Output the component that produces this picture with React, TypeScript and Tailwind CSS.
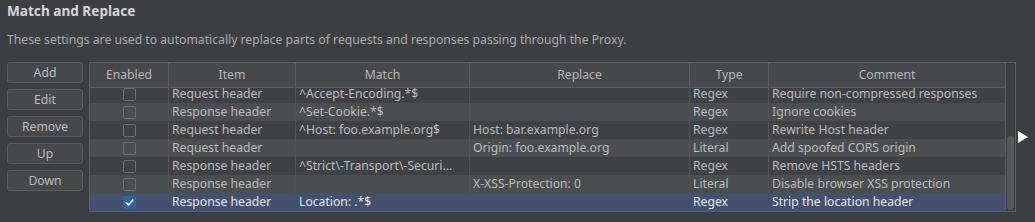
import React from "react";

type Rule = {
  enabled: boolean;
  item: string;
  match: string;
  replace: string;
  type: string;
  comment: string;
};

const rules: Rule[] = [
  { enabled: false, item: "Request header", match: "^Accept-Encoding.*$", replace: "", type: "Regex", comment: "Require non-compressed responses" },
  { enabled: false, item: "Response header", match: "^Set-Cookie.*$", replace: "", type: "Regex", comment: "Ignore cookies" },
  { enabled: false, item: "Request header", match: "^Host: foo.example.org$", replace: "Host: bar.example.org", type: "Regex", comment: "Rewrite Host header" },
  { enabled: false, item: "Request header", match: "", replace: "Origin: foo.example.org", type: "Literal", comment: "Add spoofed CORS origin" },
  { enabled: false, item: "Response header", match: "^Strict\\-Transport\\-Securi...", replace: "", type: "Regex", comment: "Remove HSTS headers" },
  { enabled: false, item: "Response header", match: "", replace: "X-XSS-Protection: 0", type: "Literal", comment: "Disable browser XSS protection" },
  { enabled: true, item: "Response header", match: "Location: .*$", replace: "", type: "Regex", comment: "Strip the location header" },
];

const buttons = ["Add", "Edit", "Remove", "Up", "Down"];

function Checkbox({ checked }: { checked: boolean }) {
  if (checked) {
    return (
      <span className="grid h-[13px] w-[13px] place-items-center rounded-[2px] bg-[#2f65a8]">
        <svg viewBox="0 0 12 12" className="h-[11px] w-[11px]">
          <path d="M2.5 6.2 L5 8.6 L9.6 3.2" fill="none" stroke="#ffffff" strokeWidth="1.6" strokeLinecap="round" strokeLinejoin="round" />
        </svg>
      </span>
    );
  }
  return <span className="h-[13px] w-[13px] rounded-[2px] border border-[#6b6f71]" />;
}

export default function App() {
  return (
    <div className="h-[222px] w-[1035px] overflow-hidden bg-[#3c3f41] pt-[1px] font-['Noto_Sans',sans-serif] text-[12px] text-[#bbbbbb]">
      <div className="px-[7px]">
        <h1 className="text-[13.6px] leading-[20px] font-bold text-[#d6d6d6]">Match and Replace</h1>
        <p className="mt-[10px] text-[12.2px] leading-[18px] text-[#a9acae]">
          These settings are used to automatically replace parts of requests and responses passing through the Proxy.
        </p>
      </div>

      <div className="mt-[13px] flex items-start pl-[7px]">
        <div className="flex w-[76px] flex-col gap-[6px]">
          {buttons.map((b) => (
            <button
              key={b}
              className="h-[21px] rounded-[3px] border border-[#5b5e60] bg-[#45494b] text-[12.2px] leading-[19px] text-[#bdbdbd]"
            >
              {b}
            </button>
          ))}
        </div>

        <div className="ml-[6px] flex h-[150px] w-[927px] border border-[#5c5f61]">
          <div className="flex min-w-0 flex-1 flex-col">
            <div className="flex h-[25px] shrink-0 border-b border-[#5c5f61] bg-[#45494a] text-[12.2px] text-[#b8b8b8]">
              <div className="flex w-[79px] items-center justify-center border-r border-[#5c5f61]">Enabled</div>
              <div className="flex w-[127px] items-center justify-center border-r border-[#5c5f61]">Item</div>
              <div className="flex w-[174px] items-center justify-center border-r border-[#5c5f61]">Match</div>
              <div className="flex w-[220px] items-center justify-center border-r border-[#5c5f61]">Replace</div>
              <div className="flex w-[79px] items-center justify-center border-r border-[#5c5f61]">Type</div>
              <div className="flex flex-1 items-center justify-center">Comment</div>
            </div>
            <div className="flex-1 overflow-hidden">
              <div className="-mt-[3px]">
                {rules.map((r, i) => {
                  const selected = r.enabled;
                  const bg = selected ? "bg-[#41516f]" : i % 2 === 0 ? "bg-[#3f4244]" : "bg-[#4a4e4f]";
                  const text = selected ? "text-[#e6e6e6]" : "text-[#bcbcbc]";
                  const sep = selected ? "border-transparent" : "border-[#515556]";
                  return (
                    <div key={i} className={`flex h-[18px] text-[12.2px] leading-[18px] ${bg} ${text}`}>
                      <div className={`flex w-[79px] items-center justify-center border-r ${sep}`}>
                        <Checkbox checked={r.enabled} />
                      </div>
                      <div className={`w-[127px] truncate border-r px-[3px] ${sep}`}>{r.item}</div>
                      <div className={`w-[174px] truncate border-r px-[3px] ${sep}`}>{r.match}</div>
                      <div className={`w-[220px] truncate border-r px-[3px] ${sep}`}>{r.replace}</div>
                      <div className={`w-[79px] truncate border-r px-[3px] ${sep}`}>{r.type}</div>
                      <div className="flex-1 truncate px-[3px]">{r.comment}</div>
                    </div>
                  );
                })}
              </div>
            </div>
          </div>
          <div className="flex w-[10px] flex-col border-l border-[#5c5f61] bg-[#3c3f41] px-[1px] pt-[73px] pb-[1px]">
            <div className="flex-1 rounded-full bg-[#55595b]" />
          </div>
        </div>

        <div className="ml-[2px] mt-[69px]">
          <svg viewBox="0 0 10 12" className="h-[12px] w-[10px]">
            <path d="M0 0 L10 6 L0 12 Z" fill="#ffffff" />
          </svg>
        </div>
      </div>
    </div>
  );
}
